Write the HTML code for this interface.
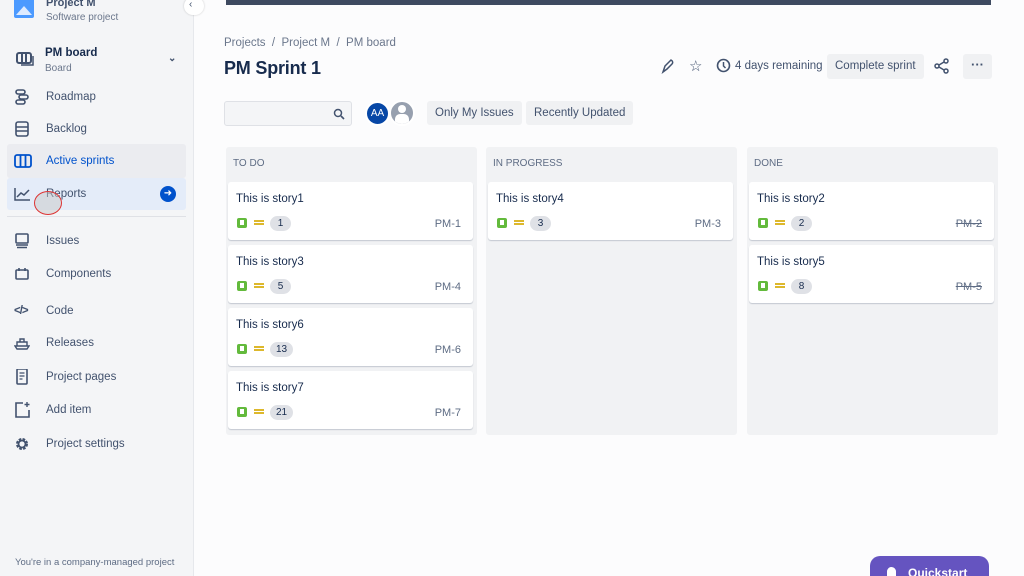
<!DOCTYPE html>
<html style="width:1024px;height:576px;overflow:hidden"><head><meta charset="utf-8"><style>
*{box-sizing:border-box;margin:0;padding:0}
body{width:1024px;height:576px;overflow:hidden;background:#fcfcfd;font-family:"Liberation Sans",sans-serif;color:#42526e;position:relative;font-size:11px}
.abs{position:absolute}
.side{left:0;top:0;width:194px;height:576px;background:#f4f5f7;border-right:1px solid #e6e8ec}
.nav{position:absolute;left:14px;font-size:11.5px;color:#42526e}
.nav svg{position:absolute;left:0;top:-2px}
.nav span{position:absolute;left:32px;top:0;white-space:nowrap}
.col{background:#f1f2f4;border-radius:3px;width:251px;height:288px;top:147px}
.col h4{font-size:10px;font-weight:normal;color:#5e6c84;position:absolute;left:7px;top:11px}
.card{position:absolute;left:2px;width:245px;height:58px;background:#fff;border-radius:3px;box-shadow:0 1px 1px rgba(9,30,66,.2)}
.card .t{position:absolute;left:8px;top:11px;font-size:11.5px;color:#172b4d}
.card .g{position:absolute;left:9px;top:36px;width:10px;height:10px;background:#63ba3c;border-radius:2px}
.card .g:after{content:"";position:absolute;left:3px;top:2px;width:4px;height:5px;background:#fff}
.card .e{position:absolute;left:26px;top:38px;width:10px;height:2px;background:#ddb82c;box-shadow:0 3px 0 #ddb82c}
.card .p{position:absolute;left:42px;top:34px;height:15px;min-width:21px;padding:0 6px;border-radius:8px;background:#dfe1e6;font-size:10px;line-height:15px;text-align:center;color:#172b4d}
.card .k{position:absolute;right:12px;top:36px;font-size:11px;color:#5e6c84}
.btn{background:#f0f1f3;border-radius:3px;font-size:11.5px;color:#42526e;padding:0 8px;line-height:24px;height:24px}
</style></head><body>
<div class="abs side">
 <div class="abs" style="left:14px;top:-4px;width:20px;height:22px;background:#4c9aff;border-radius:2px"><div style="position:absolute;left:2px;bottom:3px;border-left:8px solid transparent;border-right:8px solid transparent;border-bottom:9px solid #deebff"></div></div>
 <div class="abs" style="left:46px;top:-3px;font-size:11px;font-weight:bold;color:#42526e">Project M</div>
 <div class="abs" style="left:46px;top:12px;font-size:10px;color:#6b778c">Software project</div>
 <div class="abs" style="left:184px;top:-3px;width:20px;height:18px;border-radius:9px;background:#fff;box-shadow:0 0 2px rgba(0,0,0,.2);font-size:10px;line-height:16px;padding-left:5px">‹</div>
 <svg class="abs" style="left:16px;top:51px" width="18" height="16"><rect x="1" y="2" width="14" height="10" rx="2" fill="none" stroke="#42526e" stroke-width="2"/><path d="M6 2v10M10 2v10" stroke="#42526e" stroke-width="2"/><path d="M17 5v9H5" fill="none" stroke="#42526e" stroke-width="1.5"/></svg>
 <div class="abs" style="left:45px;top:47px;font-size:11.5px;font-weight:bold;color:#172b4d">PM board</div>
 <div class="abs" style="left:45px;top:63px;font-size:10px;color:#6b778c">Board</div>
 <div class="abs" style="left:168px;top:53px;font-size:10px;font-weight:bold">⌄</div>
 <div class="nav" style="top:91px"><svg width="16" height="16"><rect x="2" y="1" width="9" height="4" rx="2" fill="none" stroke="#42526e" stroke-width="1.6"/><rect x="5" y="6" width="9" height="4" rx="2" fill="none" stroke="#42526e" stroke-width="1.6"/><rect x="2" y="11" width="9" height="4" rx="2" fill="none" stroke="#42526e" stroke-width="1.6"/></svg><span>Roadmap</span></div>
 <div class="nav" style="top:123px"><svg width="16" height="16"><rect x="2" y="1" width="12" height="14" rx="2" fill="none" stroke="#42526e" stroke-width="1.6"/><path d="M2 6h12M2 10h12" stroke="#42526e" stroke-width="1.6"/></svg><span>Backlog</span></div>
 <div class="abs" style="left:7px;top:144px;width:179px;height:34px;background:#ebecf0;border-radius:3px"></div>
 <div class="nav" style="top:155px"><svg width="18" height="16"><rect x="1" y="2" width="16" height="12" rx="2" fill="none" stroke="#0052cc" stroke-width="1.8"/><path d="M6.5 2v12M11.5 2v12" stroke="#0052cc" stroke-width="1.8"/></svg><span style="color:#0052cc">Active sprints</span></div>
 <div class="abs" style="left:7px;top:178px;width:179px;height:32px;background:#e4ecf9;border-radius:3px"></div>
 <div class="nav" style="top:188px"><svg width="18" height="16"><path d="M1 2v12h15" fill="none" stroke="#42526e" stroke-width="1.5"/><path d="M3 11l4-4 3 2 5-5" fill="none" stroke="#42526e" stroke-width="1.5"/></svg><span>Reports</span></div>
 <div class="abs" style="left:160px;top:186px;width:16px;height:16px;border-radius:8px;background:#0052cc;color:#fff;font-size:10px;text-align:center;line-height:16px">➜</div>
 <div class="abs" style="left:34px;top:191px;width:28px;height:24px;border:1.5px solid #d33;border-radius:50%;background:rgba(200,200,200,.5)"></div>
 <div class="abs" style="left:7px;top:216px;width:179px;height:1px;background:#dfe1e6"></div>
 <div class="nav" style="top:235px"><svg width="16" height="16"><rect x="2" y="1" width="12" height="9" rx="1" fill="none" stroke="#42526e" stroke-width="1.6"/><path d="M2 12h12M3 14.5h10" stroke="#42526e" stroke-width="1.4"/></svg><span>Issues</span></div>
 <div class="nav" style="top:268px"><svg width="16" height="16"><rect x="2" y="4" width="12" height="9" rx="1" fill="none" stroke="#42526e" stroke-width="1.6"/><path d="M5 2v3M11 2v3" stroke="#42526e" stroke-width="1.6"/></svg><span>Components</span></div>
 <div class="nav" style="top:305px"><span style="left:0;font-weight:bold;letter-spacing:-1px">&lt;/&gt;</span><span>Code</span></div>
 <div class="nav" style="top:337px"><svg width="16" height="16"><path d="M1 11h14l-2 3H3z M3 11V7h10v4M6 7V4h4v3" fill="none" stroke="#42526e" stroke-width="1.4"/></svg><span>Releases</span></div>
 <div class="nav" style="top:371px"><svg width="16" height="16"><rect x="3" y="0" width="10" height="15" rx="1" fill="none" stroke="#42526e" stroke-width="1.6"/><path d="M5.5 4h5M5.5 7h5M5.5 10h3" stroke="#42526e" stroke-width="1.3"/></svg><span>Project pages</span></div>
 <div class="nav" style="top:404px"><svg width="16" height="16"><path d="M9 1H2v14h13V8" fill="none" stroke="#42526e" stroke-width="1.6"/><path d="M13 0v5M10.5 2.5h5" stroke="#42526e" stroke-width="1.4"/></svg><span>Add item</span></div>
 <div class="nav" style="top:438px"><svg width="16" height="16"><circle cx="8" cy="8" r="4.5" fill="none" stroke="#42526e" stroke-width="3" stroke-dasharray="2.4 1.2"/><circle cx="8" cy="8" r="3.5" fill="none" stroke="#42526e" stroke-width="1.8"/></svg><span>Project settings</span></div>
 <div class="abs" style="left:15px;top:557px;font-size:9.5px;color:#5e6c84">You're in a company-managed project</div>
</div>
<div class="abs" style="left:226px;top:0;width:765px;height:5px;background:#3e4a60"></div>
<div class="abs" style="left:224px;top:37px;font-size:11.5px;color:#6b778c">Projects &nbsp;/&nbsp; Project M &nbsp;/&nbsp; PM board</div>
<div class="abs" style="left:224px;top:58px;font-size:18px;color:#172b4d;font-weight:bold;letter-spacing:-0.2px">PM Sprint 1</div>
<svg class="abs" style="left:659px;top:58px" width="16" height="16"><path d="M4 14l2-6 6-6c2 1 2 3 1 4l-5 5z" fill="none" stroke="#42526e" stroke-width="1.5"/></svg>
<div class="abs" style="left:689px;top:57px;font-size:15px;color:#42526e">☆</div>
<svg class="abs" style="left:716px;top:58px" width="15" height="15"><circle cx="7.5" cy="7.5" r="6" fill="none" stroke="#42526e" stroke-width="1.6"/><path d="M7.5 4v4l2 2" fill="none" stroke="#42526e" stroke-width="1.5"/></svg>
<div class="abs" style="left:735px;top:60px;font-size:11.5px;color:#42526e">4 days remaining</div>
<div class="abs btn" style="left:827px;top:54px;height:25px;line-height:25px">Complete sprint</div>
<svg class="abs" style="left:934px;top:58px" width="16" height="16"><circle cx="12" cy="3" r="2" fill="none" stroke="#42526e" stroke-width="1.5"/><circle cx="3" cy="8" r="2" fill="none" stroke="#42526e" stroke-width="1.5"/><circle cx="12" cy="13" r="2" fill="none" stroke="#42526e" stroke-width="1.5"/><path d="M5 7l5-3M5 9l5 3" stroke="#42526e" stroke-width="1.5"/></svg>
<div class="abs btn" style="left:963px;top:54px;width:29px;height:25px;line-height:22px;text-align:center;font-weight:bold;font-size:13px;padding:0">···</div>
<div class="abs" style="left:224px;top:101px;width:128px;height:25px;border:1px solid #dfe1e6;background:#f4f5f7;border-radius:3px"></div>
<svg class="abs" style="left:333px;top:108px" width="12" height="12"><circle cx="5" cy="5" r="3.5" fill="none" stroke="#42526e" stroke-width="1.5"/><path d="M8 8l3 3" stroke="#42526e" stroke-width="1.6"/></svg>
<div class="abs" style="left:365px;top:101px;width:25px;height:25px;border-radius:50%;background:#0747a6;color:#fff;font-size:10px;text-align:center;line-height:21px;border:2px solid #fff">AA</div>
<div class="abs" style="left:389px;top:100px;width:26px;height:26px;border-radius:50%;background:#97a0af;border:2px solid #fff;overflow:hidden"><div style="position:absolute;left:7px;top:3px;width:8px;height:8px;border-radius:50%;background:#fff"></div><div style="position:absolute;left:4px;top:12px;width:14px;height:12px;border-radius:5px 5px 0 0;background:#fff"></div></div>
<div class="abs btn" style="left:427px;top:101px">Only My Issues</div>
<div class="abs btn" style="left:526px;top:101px">Recently Updated</div>

<div class="abs col" style="left:226px"><h4>TO DO</h4>
 <div class="card" style="top:35px"><div class="t">This is story1</div><div class="g"></div><div class="e"></div><div class="p">1</div><div class="k">PM-1</div></div>
 <div class="card" style="top:98px"><div class="t">This is story3</div><div class="g"></div><div class="e"></div><div class="p">5</div><div class="k">PM-4</div></div>
 <div class="card" style="top:161px"><div class="t">This is story6</div><div class="g"></div><div class="e"></div><div class="p">13</div><div class="k">PM-6</div></div>
 <div class="card" style="top:224px"><div class="t">This is story7</div><div class="g"></div><div class="e"></div><div class="p">21</div><div class="k">PM-7</div></div>
</div>
<div class="abs col" style="left:486px"><h4>IN PROGRESS</h4>
 <div class="card" style="top:35px"><div class="t">This is story4</div><div class="g"></div><div class="e"></div><div class="p">3</div><div class="k">PM-3</div></div>
</div>
<div class="abs col" style="left:747px"><h4>DONE</h4>
 <div class="card" style="top:35px"><div class="t">This is story2</div><div class="g"></div><div class="e"></div><div class="p">2</div><div class="k" style="text-decoration:line-through">PM-2</div></div>
 <div class="card" style="top:98px"><div class="t">This is story5</div><div class="g"></div><div class="e"></div><div class="p">8</div><div class="k" style="text-decoration:line-through">PM-5</div></div>
</div>
<div class="abs" style="left:870px;top:556px;width:119px;height:20px;border-radius:10px 10px 0 0;background:#6554c0;color:#fff;font-size:12px;font-weight:bold;padding:10px 0 0 38px;overflow:hidden;line-height:14px">Quickstart</div>
<div class="abs" style="left:887px;top:567px;width:9px;height:9px;border-radius:50% 50% 0 0;background:#fff"></div>
</body></html>
